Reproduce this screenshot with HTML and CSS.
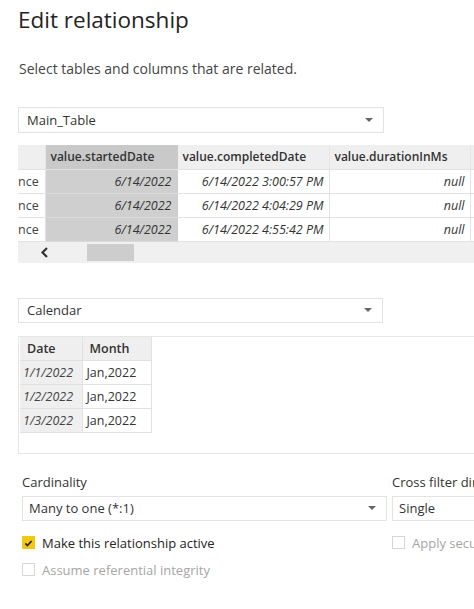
FILE: index.html
```html
<!DOCTYPE html>
<html>
<head>
<meta charset="utf-8">
<link rel="stylesheet" href="styles.css">
</head>
<body>
<div class="page">
  <h1 class="title">Edit relationship</h1>
  <p class="subtitle">Select tables and columns that are related.</p>

  <div class="select select-main">
    <span>Main_Table</span>
    <svg class="caret" width="8" height="5" viewBox="0 0 8 5"><path d="M0 0H8L4 4Z" fill="#666"/></svg>
  </div>

  <div class="grid-wrap">
    <table class="grid">
      <colgroup>
        <col style="width:27px"><col style="width:132px"><col style="width:152px"><col style="width:141px"><col style="width:60px">
      </colgroup>
      <thead>
        <tr><th></th><th class="sel">value.startedDate</th><th>value.completedDate</th><th>value.durationInMs</th><th></th></tr>
      </thead>
      <tbody>
        <tr><td class="cut">nce</td><td class="sel num">6/14/2022</td><td class="num">6/14/2022 3:00:57 PM</td><td class="num">null</td><td></td></tr>
        <tr><td class="cut">nce</td><td class="sel num">6/14/2022</td><td class="num">6/14/2022 4:04:29 PM</td><td class="num">null</td><td></td></tr>
        <tr><td class="cut">nce</td><td class="sel num">6/14/2022</td><td class="num">6/14/2022 4:55:42 PM</td><td class="num">null</td><td></td></tr>
      </tbody>
    </table>
    <div class="hscroll">
      <svg class="arrow" width="9" height="11" viewBox="0 0 9 11"><path d="M7 1L2.5 5.5L7 10" fill="none" stroke="#333" stroke-width="2.2"/></svg>
      <div class="thumb"></div>
    </div>
  </div>

  <div class="select select-cal">
    <span>Calendar</span>
    <svg class="caret" width="8" height="5" viewBox="0 0 8 5"><path d="M0 0H8L4 4Z" fill="#666"/></svg>
  </div>

  <div class="cal-wrap">
    <table class="cal">
      <colgroup><col style="width:62px"><col style="width:69px"></colgroup>
      <thead><tr><th>Date</th><th>Month</th></tr></thead>
      <tbody>
        <tr><td class="d">1/1/2022</td><td>Jan,2022</td></tr>
        <tr><td class="d">1/2/2022</td><td>Jan,2022</td></tr>
        <tr><td class="d">1/3/2022</td><td>Jan,2022</td></tr>
      </tbody>
    </table>
  </div>

  <div class="options">
    <div class="col-left">
      <div class="label">Cardinality</div>
      <div class="select select-card">
        <span>Many to one (*:1)</span>
        <svg class="caret" width="8" height="5" viewBox="0 0 8 5"><path d="M0 0H8L4 4Z" fill="#666"/></svg>
      </div>
      <div class="check">
        <span class="box on"><svg width="13" height="13" viewBox="0 0 13 13"><path d="M2.8 6.3L5.2 9L10.2 3.6" fill="none" stroke="#252423" stroke-width="2"/></svg></span>
        <span>Make this relationship active</span>
      </div>
      <div class="check disabled">
        <span class="box"></span>
        <span>Assume referential integrity</span>
      </div>
    </div>
    <div class="col-right">
      <div class="label">Cross filter direction</div>
      <div class="select select-cross"><span>Single</span></div>
      <div class="check disabled">
        <span class="box"></span>
        <span>Apply security filter in both directions</span>
      </div>
    </div>
  </div>
</div>
</body>
</html>
```

FILE: styles.css
```css
html, body {
  margin: 0;
  padding: 0;
  background: #ffffff;
  overflow: hidden;
}
body {
  font-family: "Open Sans", "Noto Sans", sans-serif;
  color: #333333;
  width: 474px;
  height: 609px;
}
.page {
  padding: 0 0 0 18px;
  overflow: hidden;
  height: 609px;
  box-sizing: border-box;
}
.title {
  margin: 0;
  padding-top: 5px;
  font-size: 22.5px;
  font-weight: 400;
  line-height: 30px;
  color: #252423;
  white-space: nowrap;
}
.subtitle {
  margin: 25px 0 0 1px;
  font-size: 14px;
  line-height: 18px;
  color: #444444;
  white-space: nowrap;
}
.select {
  box-sizing: border-box;
  border: 1px solid #e3e3e3;
  background: #fff;
  display: flex;
  align-items: center;
  justify-content: space-between;
  padding: 0 10px 0 8px;
  font-size: 13px;
  color: #333;
  white-space: nowrap;
  overflow: hidden;
}
.select-main {
  margin-top: 29px;
  width: 366px;
  height: 26px;
}
.caret { flex: none; }

.grid-wrap {
  margin-top: 12px;
  width: 456px;
  overflow: hidden;
}
.grid {
  border-collapse: collapse;
  table-layout: fixed;
  width: 512px;
  font-size: 12.5px;
}
.grid th, .grid td {
  height: 24px;
  padding: 0 5px;
  box-sizing: border-box;
  border-right: 1px solid #e2e2e2;
  border-bottom: 1px solid #e2e2e2;
  white-space: nowrap;
  overflow: hidden;
  color: #333;
}
.grid th {
  background: #efefef;
  font-weight: 600;
  font-size: 12px;
  text-align: left;
  border-bottom: 1px solid #e2e2e2;
  border-right: 1px solid #e6e6e6;
}
.grid th.sel {
  background: #c9c9c9;
  border-right-color: #c9c9c9;
}
.grid td {
  background: #fff;
  font-style: italic;
}
.grid td.cut {
  font-style: normal;
  padding: 0;
  text-align: left;
  color: #444;
}
.grid td.num {
  text-align: right;
  padding-right: 5px;
}
.grid td.sel {
  background: #cfcfcf;
  border-bottom-color: #dadada;
  border-right-color: #cfcfcf;
}
.hscroll {
  height: 21px;
  background: #f0f0f0;
  display: flex;
  align-items: center;
}
.arrow {
  margin-left: 22px;
}
.thumb {
  margin-left: 38px;
  width: 47px;
  height: 17px;
  background: #cdcdcd;
}

.select-cal {
  margin-top: 35px;
  width: 365px;
  height: 25px;
}
.cal-wrap {
  margin-top: 13px;
  height: 118px;
  box-sizing: border-box;
  border-top: 1px solid #e6e6e6;
  border-left: 1px solid #e6e6e6;
  border-bottom: 1px solid #e6e6e6;
  padding-left: 1px;
}
.cal {
  border-collapse: collapse;
  table-layout: fixed;
  width: 131px;
  font-size: 12.5px;
}
.cal th, .cal td {
  height: 24px;
  box-sizing: border-box;
  padding: 0 4px;
  border-right: 1px solid #e2e2e2;
  border-bottom: 1px solid #e2e2e2;
  white-space: nowrap;
  text-align: left;
  color: #333;
}
.cal th {
  background: #efefef;
  font-weight: 600;
  padding-left: 7px;
}
.cal td.d {
  background: #efefef;
  font-style: italic;
  padding: 0 3px;
  color: #444;
}

.options {
  margin-top: 19px;
  margin-left: 4px;
  display: grid;
  grid-template-columns: 365px 200px;
  column-gap: 5px;
}
.label {
  font-size: 13px;
  line-height: 18px;
  color: #333;
  white-space: nowrap;
}
.select-card, .select-cross {
  margin-top: 5px;
  height: 25px;
  padding-left: 6px;
  font-size: 13px;
}
.select-card { width: 365px; }
.check {
  display: flex;
  align-items: center;
  gap: 7px;
  height: 14px;
  margin-top: 15px;
  font-size: 13px;
  color: #252423;
  white-space: nowrap;
}
.check + .check { margin-top: 13px; }
.check.disabled { color: #a6a6a6; }
.box {
  width: 13px;
  height: 13px;
  box-sizing: border-box;
  border: 1px solid #d6d6d6;
  background: #fff;
  flex: none;
  display: flex;
}
.box.on {
  background: #f2c811;
  border-color: #f2c811;
}
```
